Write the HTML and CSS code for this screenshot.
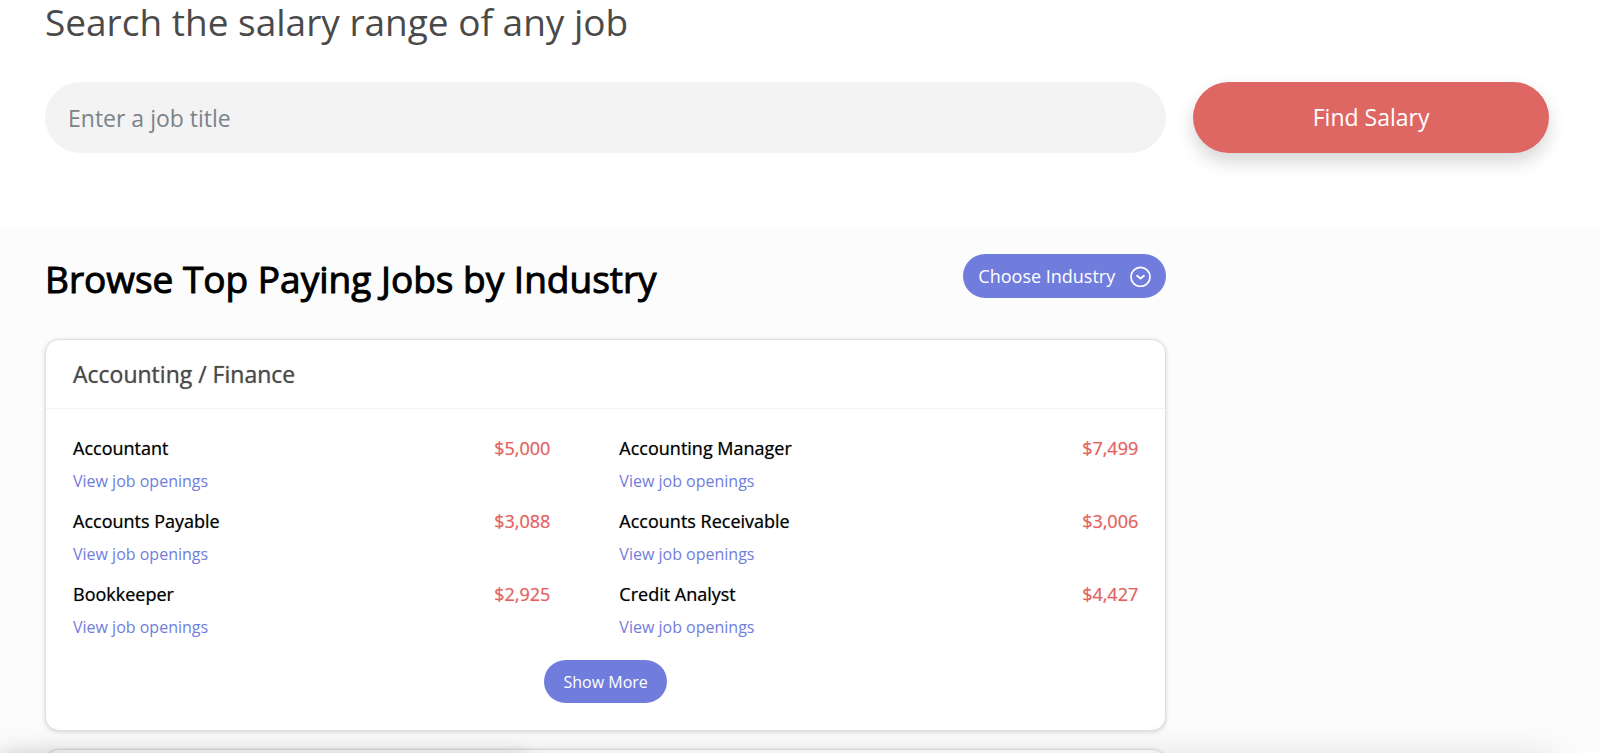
FILE: index.html
```html
<!DOCTYPE html>
<html lang="en">
<head>
<meta charset="utf-8">
<meta name="viewport" content="width=device-width, initial-scale=1">
<title>Salary Search</title>
<link rel="stylesheet" href="styles.css">
</head>
<body>
<section class="search">
  <h1 class="search-title"><label class="search-label" for="job-title">Search the salary range of any job</label></h1>
  <form class="columns">
    <input class="search-input main-column" id="job-title" type="text" placeholder="Enter a job title">
    <button class="find-button side-column" type="submit">Find Salary</button>
  </form>
</section>
<main class="browse">
  <div class="columns">
    <div class="main-column">
      <header class="browse-header">
        <h2 class="browse-title">Browse Top Paying Jobs by Industry</h2>
        <button class="pill choose-button" type="button">Choose Industry
          <svg class="chevron" viewBox="0 0 22 22" fill="none" stroke="currentColor" aria-hidden="true"><circle cx="11.5" cy="11.9" r="9.5" stroke-width="1.7"/><path d="M8.1 10.8 11.5 13.5l3.4-2.7" stroke-width="1.9" stroke-linecap="round" stroke-linejoin="round"/></svg>
        </button>
      </header>
      <section class="card">
        <h3 class="card-title">Accounting / Finance</h3>
        <div class="card-body">
          <ul class="jobs">
            <li class="job"><span class="job-name">Accountant</span><span class="job-pay">$5,000</span><a class="job-link" href="#">View job openings</a></li>
            <li class="job"><span class="job-name">Accounting Manager</span><span class="job-pay">$7,499</span><a class="job-link" href="#">View job openings</a></li>
            <li class="job"><span class="job-name">Accounts Payable</span><span class="job-pay">$3,088</span><a class="job-link" href="#">View job openings</a></li>
            <li class="job"><span class="job-name">Accounts Receivable</span><span class="job-pay">$3,006</span><a class="job-link" href="#">View job openings</a></li>
            <li class="job"><span class="job-name">Bookkeeper</span><span class="job-pay">$2,925</span><a class="job-link" href="#">View job openings</a></li>
            <li class="job"><span class="job-name">Credit Analyst</span><span class="job-pay">$4,427</span><a class="job-link" href="#">View job openings</a></li>
          </ul>
          <button class="pill more-button" type="button">Show More</button>
        </div>
      </section>
      <section class="card card-next"></section>
    </div>
  </div>
</main>
<div class="bottom-shade"></div>
<div class="bottom-shade corner-shade"></div>
</body>
</html>
```
FILE: styles.css
```css
* {
  box-sizing: border-box;
}

body {
  margin: 0;
  min-height: 100vh;
  display: flex;
  flex-direction: column;
  background: #fff;
  color: #000;
  font-family: "Open Sans", sans-serif;
}

h1, h2, h3, ul {
  margin: 0;
  padding: 0;
}

button, input {
  border: 0;
  font-family: inherit;
}

button {
  cursor: pointer;
}

.search {
  flex: none;
  padding: 0 51px 74px 45px;
}

.search-title {
  margin-bottom: 39px;
  color: #4a4a4a;
  font-size: 37px;
  font-weight: 400;
  line-height: 43px;
}

.search-label {
  display: block;
}

.columns {
  display: grid;
  grid-template-columns: repeat(12, 1fr);
  column-gap: 27px;
}

.main-column {
  grid-column: span 9;
  min-width: 0;
}

.side-column {
  grid-column: span 3;
}

.search-input {
  height: 71px;
  padding: 0 23px;
  border-radius: 36px;
  background: #f3f3f3;
  font-size: 23px;
}

.search-input::placeholder {
  color: #7b838a;
}

.find-button {
  height: 71px;
  padding: 0 0 2px;
  border-radius: 36px;
  background: #df6763;
  box-shadow: 0 9px 18px rgba(0, 0, 0, 0.16);
  color: #fff;
  font-size: 23px;
}

.browse {
  flex: 1;
  padding: 27px 51px 0 45px;
  background: #fcfcfc;
}

.browse-header {
  display: flex;
  align-items: flex-start;
  justify-content: space-between;
  margin-bottom: 36px;
}

.browse-title {
  font-size: 37px;
  font-weight: 400;
  line-height: 49px;
  -webkit-text-stroke: 1px;
}

.pill {
  border-radius: 23px;
  background: #717ddc;
  color: #fff;
}

.choose-button {
  display: flex;
  align-items: center;
  gap: 14px;
  height: 44px;
  padding: 0 15px;
  font-size: 18px;
}

.chevron {
  width: 22px;
  height: 22px;
}

.card {
  margin-bottom: 18px;
  border: 1px solid #e0e0e0;
  border-radius: 14px;
  background: #fff;
  box-shadow: 0 1px 4px rgba(0, 0, 0, 0.16);
}

.card-title {
  padding: 18px 27px;
  border-bottom: 1px solid #f3f3f3;
  color: #4a4a4a;
  font-size: 23px;
  font-weight: 400;
  line-height: 32px;
  text-shadow: 0 0 1px rgba(74, 74, 74, 0.7);
}

.card-body {
  padding: 23px 27px 27px;
}

.jobs {
  display: grid;
  grid-template-columns: 46fr 50fr;
  gap: 8px 69px;
  list-style: none;
}

.job {
  display: grid;
  grid-template-columns: 1fr auto;
  row-gap: 1px;
  line-height: 32px;
  font-size: 18px;
}

.job-name {
  text-shadow: 0 0 1px rgba(0, 0, 0, 0.5);
}

.job-pay {
  color: #e2625f;
  text-shadow: 0 0 1px rgba(226, 98, 95, 0.5);
}

.job-link {
  color: #717ddc;
  font-size: 16px;
  line-height: 32px;
  text-decoration: none;
}

.more-button {
  display: block;
  height: 43px;
  margin: 17px auto 0;
  padding: 0 19px;
  font-size: 16px;
}

.card-next {
  height: 60px;
}

/* Shadows cast by the bars docked under the window */
.bottom-shade {
  position: fixed;
  top: 100%;
  left: 0;
  right: 45px;
  height: 60px;
  box-shadow: 0 0 36px rgba(0, 0, 0, 0.1);
}

.corner-shade {
  right: 67%;
  box-shadow: 0 0 18px rgba(0, 0, 0, 0.12);
}
```
